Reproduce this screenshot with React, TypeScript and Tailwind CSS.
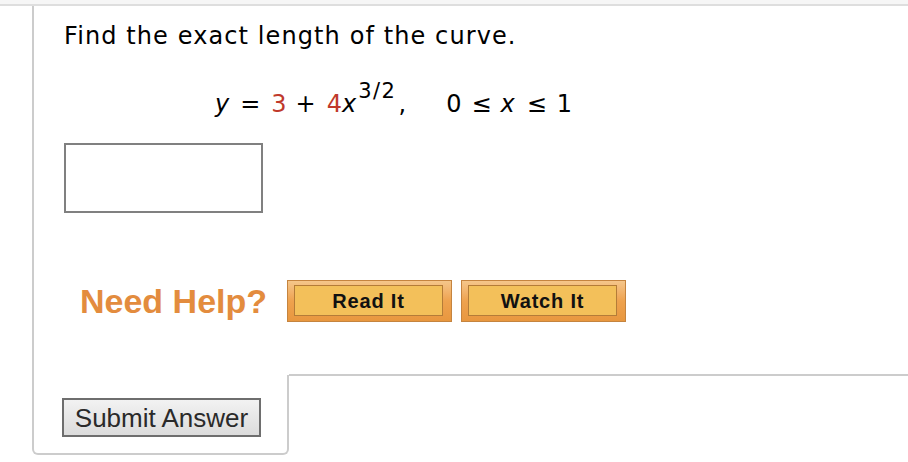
const verdana = { fontFamily: '"DejaVu Sans", Verdana, sans-serif' };
const arial = { fontFamily: '"Liberation Sans", Arial, sans-serif' };

export default function App() {
  return (
    <div className="w-[908px] h-[462px] bg-white overflow-hidden">
      <div className="h-[6px] bg-[#f6f6f6] border-b-2 border-[#dedede]" />
      <div className="ml-[32px]">
        <div className="border-l-2 border-[#cccccc] pl-[30px] pt-[16px] pb-[53px]">
          <p className="text-[24px] leading-[28px] tracking-[1.1px] text-black" style={verdana}>
            Find the exact length of the curve.
          </p>
          <div className="mt-[40px] ml-[151px] flex items-baseline text-[24px] leading-[28px] text-black" style={verdana}>
            <i>y</i>
            <span className="ml-[11px]">=</span>
            <span className="ml-[11px] text-[#c0392b]">3</span>
            <span className="ml-[9px]">+</span>
            <span className="ml-[11px] text-[#c0392b]">4</span>
            <i>x</i>
            <span className="ml-[2px] relative -top-[14px] text-[21px] leading-none tracking-[1.5px]">3/2</span>
            <span className="ml-[2px]">,</span>
            <span className="ml-[40px]">0</span>
            <span className="ml-[10px]">≤</span>
            <i className="ml-[9px]">x</i>
            <span className="ml-[12px]">≤</span>
            <span className="ml-[10px]">1</span>
          </div>
          <div className="mt-[25px] w-[199px] h-[70px] border-2 border-[#808080] bg-white" />
          <div className="mt-[67px] flex items-center" style={arial}>
            <span className="ml-[16px] w-[207px] text-[34px] font-bold text-[#e38c3e] leading-none">Need Help?</span>
            <HelpButton label="Read It" />
            <div className="w-[9px]" />
            <HelpButton label="Watch It" />
          </div>
        </div>
        <div className="flex">
          <div className="w-[257px] h-[80px] border-l-2 border-r-2 border-b-2 border-[#cccccc] rounded-b-[6px] pt-[23px] pl-[28px]">
            <button
              className="w-[199px] h-[39px] border-2 border-[#6e6e6e] bg-linear-to-b from-[#f2f2f2] to-[#dcdcdc] text-[26px] leading-none text-[#2a2a2a] flex items-center justify-center"
              style={arial}
            >
              Submit Answer
            </button>
          </div>
          <div className="flex-1 -mt-[1px] border-t-2 border-[#cccccc]" />
        </div>
      </div>
    </div>
  );
}

function HelpButton({ label }: { label: string }) {
  return (
    <div className="w-[165px] h-[42px] border border-[#c5843f] bg-linear-to-b from-[#f5c68a] via-[#eea24e] to-[#e8973f] pl-[6px] pr-[8px] pt-[4px] pb-[5px]">
      <div className="h-full border border-[#b47c38] bg-[#f3c05a] flex items-center justify-center text-[20px] font-bold tracking-[0.8px] text-[#111]" style={arial}>
        {label}
      </div>
    </div>
  );
}
